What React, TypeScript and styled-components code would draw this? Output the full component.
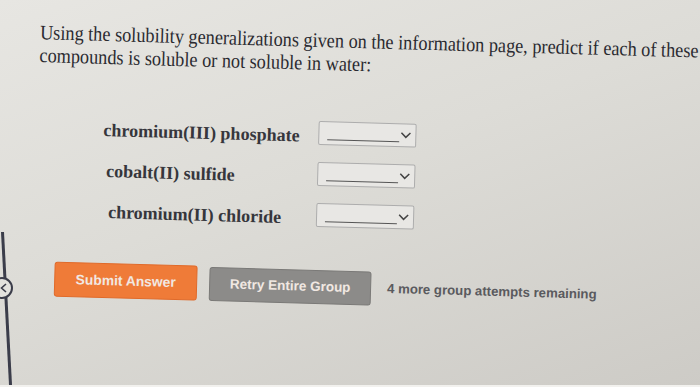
import React from "react";
import styled, { createGlobalStyle } from "styled-components";

const Global = createGlobalStyle`
  html, body { margin: 0; padding: 0; }
  body { width: 700px; height: 387px; overflow: hidden; }
`;

const Page = styled.div`
  position: relative;
  width: 700px;
  height: 387px;
  overflow: hidden;
  background: linear-gradient(160deg, #e7e6e2 0%, #dddcd7 45%, #cdcbc6 100%);
`;

/* the photographed screen is tilted slightly clockwise */
const Sheet = styled.div`
  box-sizing: border-box;
  width: 760px;
  padding: 20px 0 0 41px;
  transform: rotate(1.6deg);
  transform-origin: 0 0;
`;

const Prompt = styled.p`
  margin: 0;
  font-family: "Liberation Serif", "Times New Roman", serif;
  font-size: 20.5px;
  line-height: 23px;
  color: #2a2a30;
  white-space: nowrap;
  transform: scaleX(0.89);
  transform-origin: left top;
`;

const Rows = styled.div`
  display: grid;
  grid-template-columns: 215px 98px;
  grid-auto-rows: 24px;
  row-gap: 17px;
  margin: 46px 0 0 66px;
  align-items: center;
`;

const Label = styled.div<{ $shift?: number }>`
  font-family: "Liberation Serif", "Times New Roman", serif;
  font-weight: bold;
  font-size: 18px;
  line-height: 20px;
  color: #36363c;
  padding: 5px 0 0 ${(p) => p.$shift ?? 0}px;
`;

const Select = styled.div`
  height: 24px;
  width: 98px;
  border: 1px solid #adadad;
  border-radius: 2px;
  background: #e8e7e4;
  display: flex;
  align-items: center;
  justify-content: space-between;
  padding: 0 4px 0 8px;
  box-sizing: border-box;
`;

const Blank = styled.span`
  display: block;
  width: 72px;
  height: 1px;
  margin-top: 12px;
  background: #555;
`;

const Chevron = () => (
  <svg width="11" height="8" viewBox="0 0 11 8">
    <path d="M1 1.5 L5.5 6 L10 1.5" fill="none" stroke="#444" strokeWidth="1.5" />
  </svg>
);

const Actions = styled.div`
  display: flex;
  align-items: center;
  gap: 12px;
  margin: 42px 0 0 21px;
`;

const Button = styled.div<{ $tone: "orange" | "gray" }>`
  height: ${(p) => (p.$tone === "orange" ? 35 : 34)}px;
  display: flex;
  align-items: center;
  justify-content: center;
  width: ${(p) => (p.$tone === "orange" ? 143 : 162)}px;
  box-sizing: border-box;
  border-radius: 3px;
  font-family: "Liberation Sans", Arial, sans-serif;
  font-weight: bold;
  font-size: ${(p) => (p.$tone === "orange" ? 13.8 : 13.5)}px;
  color: #f1e8e2;
  background: ${(p) => (p.$tone === "orange" ? "#ef7b38" : "#8c8b89")};
  border: 1px solid ${(p) => (p.$tone === "orange" ? "#e06a2a" : "#7a7977")};
`;

const Remaining = styled.span`
  font-family: "Liberation Sans", Arial, sans-serif;
  font-weight: bold;
  font-size: 13.2px;
  color: #5a5a5e;
  margin-left: 4px;
`;

const Rail = styled.div`
  position: absolute;
  left: 1px;
  top: 232px;
  width: 3px;
  height: 165px;
  background: #3b3d4a;
  transform: rotate(-3deg);
  transform-origin: top;
`;

const Toggle = styled.div`
  position: absolute;
  left: -9px;
  top: 277px;
  width: 22px;
  height: 22px;
  border-radius: 50%;
  border: 2px solid #3b3d4a;
  background: #e3e2de;
  display: flex;
  align-items: center;
  justify-content: flex-end;
  padding-right: 4px;
  box-sizing: border-box;
`;

const BottomEdge = styled.div`
  position: absolute;
  left: 0;
  right: 0;
  bottom: 0;
  height: 2px;
  background: #f2f1ee;
`;

const compounds = [
  { name: "chromium(III) phosphate", shift: 0 },
  { name: "cobalt(II) sulfide", shift: 4 },
  { name: "chromium(II) chloride", shift: 7 },
];

export default function App() {
  return (
    <>
      <Global />
      <Page>
        <Sheet>
          <Prompt>
            Using the solubility generalizations given on the information page, predict if each of these
            <br />
            compounds is soluble or not soluble in water:
          </Prompt>
          <Rows>
            {compounds.map((c) => (
              <React.Fragment key={c.name}>
                <Label $shift={c.shift}>{c.name}</Label>
                <Select>
                  <Blank />
                  <Chevron />
                </Select>
              </React.Fragment>
            ))}
          </Rows>
          <Actions>
            <Button $tone="orange">Submit Answer</Button>
            <Button $tone="gray">Retry Entire Group</Button>
            <Remaining>4 more group attempts remaining</Remaining>
          </Actions>
        </Sheet>
        <Rail />
        <Toggle>
          <svg width="7" height="10" viewBox="0 0 7 10">
            <path d="M6 1 L1.5 5 L6 9" fill="none" stroke="#3b3d4a" strokeWidth="1.6" />
          </svg>
        </Toggle>
        <BottomEdge />
      </Page>
    </>
  );
}
